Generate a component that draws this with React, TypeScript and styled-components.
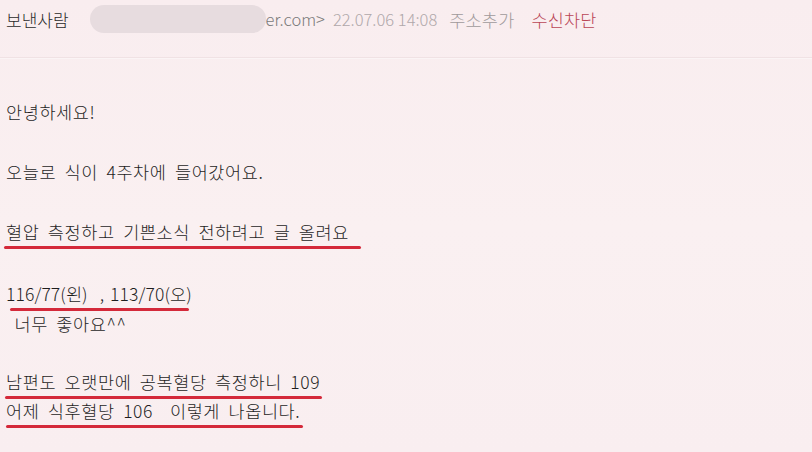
import styled, { createGlobalStyle } from "styled-components";

const GlobalStyle = createGlobalStyle`
  html, body {
    margin: 0;
    padding: 0;
    background: #f9eef0;
  }
  body {
    font-family: "Noto Sans CJK KR", "Noto Sans", sans-serif;
    color: #1e1e1e;
  }
`;

type Mark = { from: number; to: number };

const lines: { text: string; mark?: Mark; gap?: number; tight?: boolean }[] = [
  { text: "안녕하세요!" },
  { text: "오늘로 식이 4주차에 들어갔어요.", gap: 38 },
  { text: "혈압 측정하고 기쁜소식 전하려고 글 올려요", gap: 38, mark: { from: -2, to: 12 } },
  { text: "116/77(왼)  , 113/70(오)", gap: 40, mark: { from: 4, to: -3 }, tight: true },
  { text: " 너무 좋아요^^", gap: 8 },
  { text: "남편도 오랫만에 공복혈당 측정하니 109", gap: 36, mark: { from: -1, to: 2 } },
  { text: "어제 식후혈당 106  이렇게 나옵니다.", gap: 7, mark: { from: 0, to: 3 } },
];

const App = () => {
  return (
    <>
      <GlobalStyle />
      <Page>
        <Header>
          <Label>보낸사람</Label>
          <Blur />
          <Address>er.com&gt;</Address>
          <Date>22.07.06 14:08</Date>
          <Action>주소추가</Action>
          <Action $danger>수신차단</Action>
        </Header>
        <Divider />
        <Body>
          {lines.map((l, i) => (
            <Line key={i} $tight={l.tight} style={{ marginTop: l.gap ?? 0 }}>
              {l.mark ? (
                <Marked $from={l.mark.from} $to={l.mark.to}>
                  {l.text}
                </Marked>
              ) : (
                l.text
              )}
            </Line>
          ))}
        </Body>
      </Page>
    </>
  );
};

export default App;

const Page = styled.div`
  width: 812px;
  height: 452px;
  overflow: hidden;
  background: linear-gradient(180deg, #f9edef 0%, #faf0f1 50%, #f9eef0 100%);
`;

const Header = styled.div`
  display: flex;
  align-items: center;
  height: 38px;
  padding-left: 6px;
  font-size: 16.5px;
  font-weight: 300;
  white-space: nowrap;
`;

const Label = styled.span`
  color: #2a2a2a;
  font-size: 17px;
  margin-right: 21px;
`;

const Blur = styled.span`
  width: 176px;
  height: 28px;
  border-radius: 14px;
  background: #e7dcdf;
`;

const Address = styled.span`
  color: #7a7a7a;
`;

const Date = styled.span`
  color: #b0a8aa;
  margin-left: 8px;
`;

const Action = styled.span<{ $danger?: boolean }>`
  color: ${(p) => (p.$danger ? "#b94656" : "#a09a9b")};
  font-size: 17.5px;
  letter-spacing: 0.2px;
  margin-left: ${(p) => (p.$danger ? "17px" : "12px")};
`;

const Divider = styled.div`
  margin-top: 19px;
  height: 1px;
  background: #f0e2e4;
  box-shadow: 0 1px 0 #fbf4f5;
`;

const Body = styled.div`
  padding: 43px 0 0 6px;
  font-size: 17.5px;
  font-weight: 300;
  line-height: 22px;
  letter-spacing: 0.6px;
  word-spacing: 4px;
`;

const Line = styled.div<{ $tight?: boolean }>`
  white-space: pre;
  letter-spacing: ${(p) => (p.$tight ? "0.1px" : "inherit")};
  word-spacing: ${(p) => (p.$tight ? "2px" : "inherit")};
`;

const Marked = styled.span<{ $from: number; $to: number }>`
  position: relative;
  display: inline-block;

  &::after {
    content: "";
    position: absolute;
    left: ${(p) => p.$from}px;
    right: ${(p) => -p.$to}px;
    bottom: -6px;
    height: 3px;
    border-radius: 2px;
    background: #d4293a;
  }
`;
